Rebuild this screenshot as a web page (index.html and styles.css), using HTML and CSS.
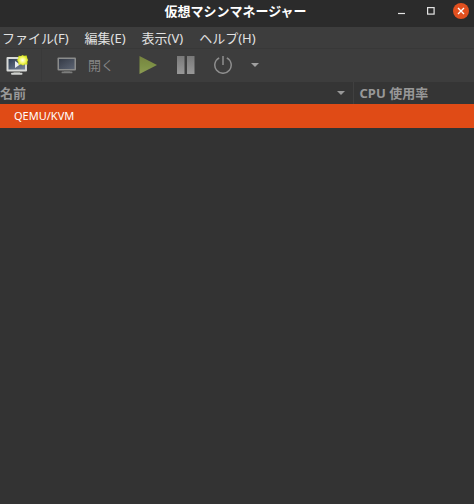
FILE: index.html
```html
<!DOCTYPE html>
<html lang="ja">
<head>
<meta charset="utf-8">
<meta name="viewport" content="width=device-width, initial-scale=1">
<title>仮想マシンマネージャー</title>
<link rel="stylesheet" href="styles.css">
</head>
<body>
<header class="titlebar">
  <h1 class="title">仮想マシンマネージャー</h1>
  <div class="window-controls">
    <button class="window-button" type="button" aria-label="最小化">
      <svg width="16" height="16" viewBox="0 0 16 16"><path d="M5 10.500h7" stroke="#e4e4e4" stroke-width="1.200"/></svg>
    </button>
    <button class="window-button" type="button" aria-label="最大化">
      <svg width="16" height="16" viewBox="0 0 16 16"><rect x="4.600" y="4.600" width="6.500" height="6.500" fill="none" stroke="#e4e4e4" stroke-width="1.200"/></svg>
    </button>
    <button class="window-button" type="button" aria-label="閉じる">
      <svg width="16" height="16" viewBox="0 0 16 16"><circle cx="8" cy="8" r="8" fill="#e2501f"/><path d="M5 5l6 6M11 5l-6 6" stroke="#fff" stroke-width="1.400"/></svg>
    </button>
  </div>
</header>
<nav class="menubar">
  <button class="menu" type="button">ファイル(F)</button>
  <button class="menu" type="button">編集(E)</button>
  <button class="menu" type="button">表示(V)</button>
  <button class="menu" type="button">ヘルプ(H)</button>
</nav>
<div class="toolbar" role="toolbar">
  <button class="tool tool-new" type="button" aria-label="新しい仮想マシン">
    <svg width="24" height="22" viewBox="0 0 24 22">
      <defs>
        <linearGradient id="screen" x1="0" y1="0" x2="1" y2="1"><stop offset="0" stop-color="#2f3d50"/><stop offset="1" stop-color="#78859a"/></linearGradient>
        <radialGradient id="glow"><stop offset="0" stop-color="#fffff0"/><stop offset=".5" stop-color="#f8fa70"/><stop offset="1" stop-color="#ccdc10"/></radialGradient>
      </defs>
      <rect x="1.500" y="3" width="20.500" height="14.500" rx="1" fill="#d8dad8"/>
      <rect x="3.500" y="5" width="16.500" height="10.500" fill="url(#screen)"/>
      <path d="M10 7l5 3.500-5 3.500z" fill="#e8ecf2"/>
      <path d="M8.500 17.500h6.500v1.500h-6.500z" fill="#888a85"/>
      <rect x="6" y="18.700" width="11.500" height="2" rx="1" fill="#cfd1ce"/>
      <path d="M13.500 1.800l2.500.2 1.500-1 1.500.8 2.700-.3.600 2.700.8 1.800-.8 1.800.2 2.700-2.700.1-1.800 1-1.800-1-2.700.1-.2-2.700-1.300-2 1.300-1.800z" fill="url(#glow)"/>
    </svg>
  </button>
  <button class="tool tool-open" type="button" disabled>
    <svg width="20" height="18" viewBox="0 0 20 18">
      <defs><linearGradient id="dim" x1="0" y1="0" x2="1" y2="1"><stop offset="0" stop-color="#343a46"/><stop offset="1" stop-color="#5c6473"/></linearGradient></defs>
      <rect x=".500" y="1.500" width="18.500" height="13" rx="1" fill="#8b8c8b"/>
      <rect x="2" y="3" width="15.500" height="10" fill="url(#dim)"/>
      <path d="M7 14.500h6v1.500H7z" fill="#5d5e5d"/>
      <rect x="4.500" y="15.500" width="11" height="1.800" rx="1" fill="#7c7d7c"/>
    </svg>
    <span>開く</span>
  </button>
  <button class="tool tool-run" type="button" aria-label="実行" disabled>
    <svg width="18" height="18" viewBox="0 0 18 18">
      <defs><linearGradient id="leaf" x1="0" y1="0" x2="0" y2="1"><stop offset="0" stop-color="#77833f"/><stop offset=".55" stop-color="#7e9246"/><stop offset="1" stop-color="#8d9b54"/></linearGradient></defs>
      <path d="M.500 0v18L18 9z" fill="url(#leaf)"/>
    </svg>
  </button>
  <button class="tool tool-pause" type="button" aria-label="一時停止" disabled>
    <svg width="18" height="18" viewBox="0 0 18 18">
      <defs><linearGradient id="steel" x1="0" y1="0" x2="0" y2="1"><stop offset="0" stop-color="#797979"/><stop offset="1" stop-color="#989898"/></linearGradient></defs>
      <path d="M0 0H7.500V18H0zM10 0H17.500V18H10z" fill="url(#steel)"/>
    </svg>
  </button>
  <button class="tool tool-power" type="button" aria-label="シャットダウン" disabled>
    <svg width="18" height="18" viewBox="0 0 18 18" fill="none" stroke="#8e8e8e" stroke-width="1.500"><path d="M9 0v9M5.200 1.800a8.200 8.200 0 1 0 7.600 0"/></svg>
  </button>
  <button class="tool" type="button" aria-label="シャットダウンのメニュー" disabled>
    <svg width="8" height="4" viewBox="0 0 8 4"><path d="M0 0h8L4 4z" fill="#a0a0a0"/></svg>
  </button>
</div>
<main>
  <table class="machines">
    <thead>
      <tr>
        <th scope="col"><div class="heading"><span>名前</span><svg width="8" height="4" viewBox="0 0 8 4"><path d="M0 0h8L4 4z" fill="#989898"/></svg></div></th>
        <th class="usage" scope="col">CPU 使用率</th>
      </tr>
    </thead>
    <tbody>
      <tr class="selected"><td>QEMU/KVM</td><td></td></tr>
    </tbody>
  </table>
</main>
</body>
</html>
```
FILE: styles.css
```css
* {
  box-sizing: border-box;
}

body {
  min-height: 100vh;
  margin: 0;
  background: #333333;
  color: #e2e2e2;
  font-family: "Noto Sans", "Noto Sans CJK JP", sans-serif;
  font-size: 13px;
  line-height: 20px;
}

button {
  padding: 0;
  border: 0;
  background: none;
  color: inherit;
  font: inherit;
}

svg {
  display: block;
  flex: none;
}

.titlebar {
  display: grid;
  grid-template-columns: 1fr auto 1fr;
  align-items: center;
  height: 27px;
  padding: 0 5px 6px 2px;
  background: #2b2b2b;
}

.title {
  grid-column: 2;
  margin: 0;
  color: #ffffff;
  font-size: 13px;
  font-weight: 700;
  line-height: 20px;
}

.window-controls {
  display: flex;
  justify-content: flex-end;
  gap: 14px;
}

.menubar {
  display: flex;
  gap: 16px;
  height: 21px;
  padding: 0 2px;
  background: #3d3d3d;
}

.toolbar {
  display: flex;
  align-items: center;
  height: 34px;
  padding-bottom: 1px;
  border-top: 1px solid #383838;
  background: #3d3d3d;
}

.tool {
  display: flex;
  align-items: center;
  color: #858585;
}

.tool-new {
  height: 100%;
  padding: 0 12px 0 5px;
  border-right: 1px solid #393939;
}

.tool-open {
  gap: 11px;
  padding: 0 25px 0 15px;
}

.tool-run {
  padding-right: 20px;
}

.tool-pause {
  padding-right: 19px;
}

.tool-power {
  padding-right: 19px;
}

.machines {
  width: 100%;
  border-collapse: collapse;
  table-layout: fixed;
}

.machines th {
  height: 22px;
  padding: 0;
  background: #353535;
  color: #989898;
  font-weight: 700;
  text-align: left;
}

.heading {
  display: flex;
  align-items: center;
  justify-content: space-between;
  padding-right: 8px;
}

.machines .usage {
  width: 121px;
  padding-left: 6px;
  border-left: 1px solid #404040;
}

.machines td {
  height: 24px;
  padding: 0 14px;
}

.selected {
  background: #e04b16;
  color: #ffffff;
  font-size: 11px;
}
```
